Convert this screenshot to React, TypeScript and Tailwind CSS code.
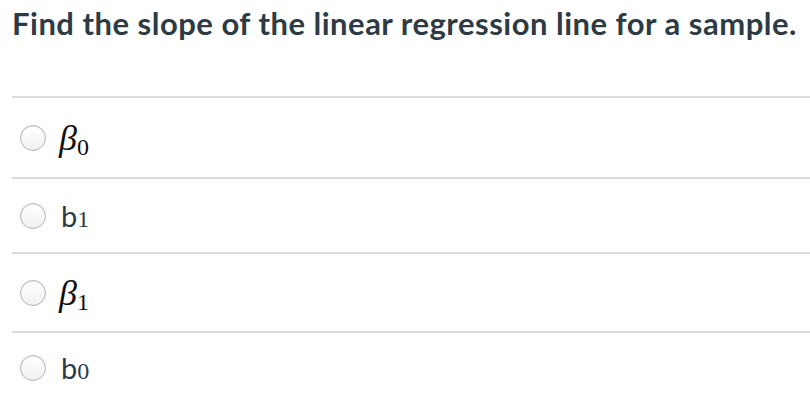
import React from "react";

const Radio = () => (
  <div className="ml-2 h-[26px] w-[26px] shrink-0 rounded-full border border-[#b4b4b4] bg-gradient-to-b from-[#ffffff] to-[#f1f1f1] shadow-[inset_0_1px_1px_rgba(0,0,0,0.08)]" />
);

const Beta = ({ sub }: { sub: string }) => (
  <span className="flex items-baseline text-[#111]" style={{ fontFamily: '"Liberation Serif", "DejaVu Serif", serif' }}>
    <span className="text-[36px] italic leading-none">β</span>
    <span className="relative top-[5px] text-[24px] leading-none">{sub}</span>
  </span>
);

const B = ({ sub }: { sub: string }) => (
  <span className="flex items-baseline text-[#2d3b45]">
    <span className="text-[29px] leading-none" style={{ fontFamily: 'Lato, "Liberation Sans", sans-serif' }}>b</span>
    <span className="text-[24px] leading-none" style={{ fontFamily: '"Liberation Serif", serif' }}>{sub}</span>
  </span>
);

export default function App() {
  return (
    <div className="h-[402px] w-[810px] overflow-hidden bg-white pl-3">
      <h1
        className="pt-[5px] text-[31px] font-bold leading-[36px] tracking-[0.5px] text-[#2d3b45]"
        style={{ fontFamily: 'Lato, "Liberation Sans", sans-serif' }}
      >
        Find the slope of the linear regression line for a sample.
      </h1>
      <div className="mt-[55px]">
        <div className="flex h-[81px] items-center gap-[13px] border-t-2 border-[#dcdcdc]">
          <Radio />
          <Beta sub="0" />
        </div>
        <div className="flex h-[75px] items-center gap-[15px] border-t-2 border-[#dcdcdc]">
          <Radio />
          <B sub="1" />
        </div>
        <div className="flex h-[79px] items-center gap-[13px] border-t-2 border-[#dcdcdc]">
          <Radio />
          <Beta sub="1" />
        </div>
        <div className="flex h-[71px] items-center gap-[15px] border-t-2 border-[#dcdcdc]">
          <Radio />
          <B sub="0" />
        </div>
      </div>
    </div>
  );
}
